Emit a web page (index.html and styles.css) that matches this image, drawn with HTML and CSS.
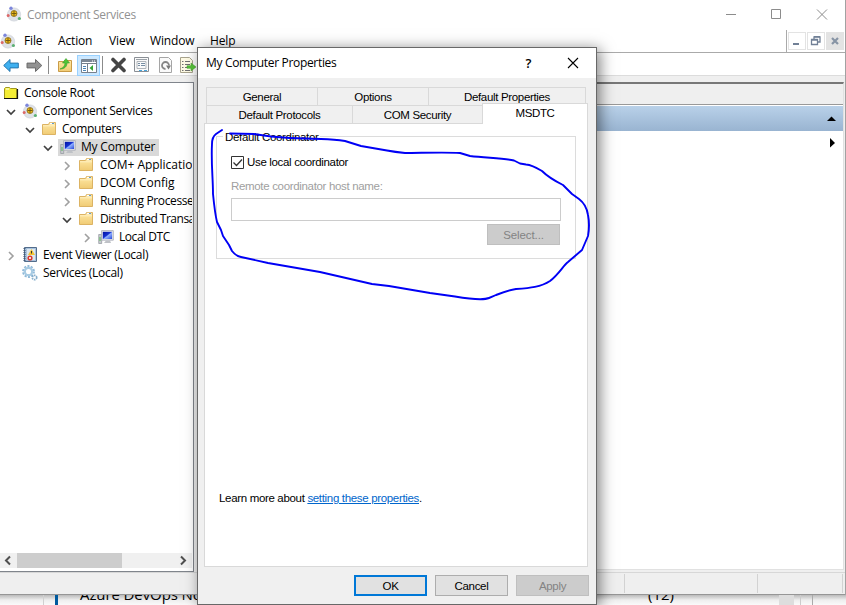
FILE: index.html
```html
<!DOCTYPE html>
<html lang="en">
<head>
<meta charset="utf-8">
<title>Component Services</title>
<link rel="stylesheet" href="styles.css">
</head>
<body>
<svg class="defs" width="0" height="0">
  <defs>
    <linearGradient id="gold" x2="0" y2="1"><stop offset="0" stop-color="#ffe9a6"/><stop offset="1" stop-color="#f0cb74"/></linearGradient>
    <linearGradient id="screen" x2="1" y2="1"><stop offset="0" stop-color="#0010a0"/><stop offset=".45" stop-color="#1530d0"/><stop offset=".55" stop-color="#90b0ff"/><stop offset="1" stop-color="#2848d8"/></linearGradient>
    <symbol id="com" viewBox="0 0 16 16">
      <circle cx="8" cy="8.500" r="6.600" fill="#dfe2e8" stroke="#cdd1d8" stroke-width=".7"/>
      <circle cx="8" cy="7.500" r="3" fill="#f0bd18" stroke="#80651c" stroke-width=".8"/>
      <path d="M8 5v5M5.500 7.500h5" stroke="#6b5410" stroke-width=".9"/>
      <circle cx="5" cy="2.200" r="1.700" fill="#7c86dc"/><circle cx="2.200" cy="9.400" r="1.500" fill="#dc6868"/><circle cx="13.400" cy="12.500" r="1.600" fill="#5cb074"/>
    </symbol>
    <symbol id="folder" viewBox="0 0 16 16">
      <path d="M1.500 3.500h6l1-2h6v12h-13z" fill="url(#gold)" stroke="#dcb363"/><path d="M9 2.500h4" stroke="#fff" stroke-width="1.400"/><path d="M11 2.500h2" stroke="#5d9bd0"/><path d="M2 4.800h12" stroke="#fff0bf"/>
    </symbol>
    <symbol id="pc" viewBox="0 0 16 16">
      <path d="M.7 5.500h3v9h-3z" fill="#c7cbd0" stroke="#8f959c" stroke-width=".7"/><path d="M2 8v4" stroke="#57b857"/>
      <path d="M3.600 1.600h11.700v9.600H3.600z" fill="#e9e9ed" stroke="#a4a8b3" stroke-width=".8"/><path d="M4.800 2.800h9.300v7.200H4.800z" fill="url(#screen)"/>
      <path d="M8 11.500h4l1 2.500H6z" fill="#bfc2c7"/>
    </symbol>
    <symbol id="down" viewBox="0 0 10 10"><path d="M1 3l4 4 4-4" fill="none" stroke="#404040" stroke-width="1.700"/></symbol>
    <symbol id="right" viewBox="0 0 10 10"><path d="M3 1l4 4-4 4" fill="none" stroke="#a0a0a0" stroke-width="1.600"/></symbol>
  </defs>
</svg>

<div class="desktop">
  <main class="window">
    <header class="titlebar">
      <svg class="logo" width="16" height="16"><use href="#com"/></svg>
      <span class="title">Component Services</span>
      <svg class="winbtns" width="110" height="30" fill="none" stroke="#8c8c8c"><path d="M5 14.500h10M50.500 9.500h9v9h-9zM96 9.500l10 10M106 9.500l-10 10"/></svg>
    </header>
    <nav class="menubar">
      <svg class="menulogo" width="16" height="16"><use href="#com"/></svg>
      <span class="m-file">File</span><span class="m-action">Action</span><span class="m-view">View</span><span class="m-window">Window</span><span class="m-help">Help</span>
      <div class="mdi">
        <b><svg width="18" height="18"><path d="M5 12h6" stroke="#718096" stroke-width="2"/></svg></b>
        <b><svg width="18" height="18" fill="none" stroke="#718096" stroke-width="1.300"><path d="M7 7V5h6v5h-2"/><path d="M4.500 7.500h6v5h-6zM7 4.700h6M4 8h7"/></svg></b>
        <b class="off"><svg width="18" height="18"><path d="M6 6l6 6M12 6l-6 6" stroke="#8794a5" stroke-width="2.200"/></svg></b>
      </div>
    </nav>
    <div class="toolbar">
      <svg class="t-back" width="17" height="15" fill="#3fb0f0" stroke="#2777ae"><path d="M.7 7.500L7 1.500v3.600h8.300v4.800H7v3.600z"/></svg>
      <svg class="t-fwd" width="17" height="15" fill="#929292" stroke="#6b6b6b"><path d="M15.800 7.500L9.500 1.500v3.600H1v4.800h8.500v3.600z"/></svg>
      <i></i>
      <svg class="t-up" width="16" height="16"><path d="M1.500 4.500h5l1-1h7v11h-13z" fill="url(#gold)" stroke="#c99b47"/><path d="M3 12c3-1 5-3 5-6H5.500L9 1.500 12.500 6H10c0 4-3 6-7 6z" fill="#4fc436" stroke="#3b9d2b" stroke-width=".6"/></svg>
      <span class="pressed"><svg width="17" height="16"><path d="M.5 1.500h15v13H.5z" fill="#fff" stroke="#76808c"/><path d="M1 3h14" stroke="#7c8794" stroke-width="2"/><path d="M.5 5.500h15M6.500 6v8" stroke="#76808c"/><path d="M11 3h1M13 3h1" stroke="#fff"/><path d="M2 8.500h3M2 10.500h3M2 12.500h3" stroke="#4b84b5"/><path d="M12 7v6L8.500 10z" fill="#36a636"/></svg></span>
      <i></i>
      <svg class="t-del" width="17" height="16"><path d="M3 2.500l11 11M14 2.500l-11 11" stroke="#454545" stroke-width="3.600" stroke-linecap="round"/></svg>
      <svg class="t-prop" width="15" height="16"><path d="M.5.500h14v14H.500z" fill="#fafafa" stroke="#8a8f95"/><path d="M2 2.500h11" stroke="#9aa1a8"/><path d="M3 4.500h9v7H3z" fill="none" stroke="#b0b5ba"/><path d="M4 6.500h2M7 6.500h4M4 8.500h2M7 8.500h4" stroke="#758da3"/><path d="M5 13.500h3M10 13.500h3" stroke="#47a4db"/></svg>
      <svg class="t-ref" width="14" height="16"><path d="M.5.500h9l3 3v12H.500z" fill="#fafafa" stroke="#a5a5a5"/><path d="M6.500 12A3.500 3.500 0 1 1 10 8.500" fill="none" stroke="#858585" stroke-width="1.800"/><path d="M7 8.500h5l-2.500 4z" fill="#777"/></svg>
      <svg class="t-exp" width="17" height="16"><path d="M.5.500h9l3 3v12H.500z" fill="#fffbe5" stroke="#a9a48e"/><path d="M2 4.500h1.500M5 4.500h5M2 7.500h1.500M5 7.500h5M2 10.500h1.500M5 10.500h4M2 13.500h1.500M5 13.500h5" stroke="#727272"/><path d="M7 8.700h4V6l5 4-5 4v-2.700H7z" fill="#58c63b" stroke="#3f9c29" stroke-width=".5"/></svg>
    </div>
    <section class="panes">
      <div class="treepane">
        <div class="tree">
          <div class="row l0"><svg width="16" height="16"><path d="M1.500 3.500l1-1h4l1 1h6v10h-12z" fill="#f4ed36" stroke="#a09820"/><path d="M1 13.500h13.500V4" fill="none" stroke="#111" stroke-width="1.200"/><path d="M3 4h3" stroke="#fff"/></svg><span>Console Root</span></div>
          <div class="row l1"><svg class="ch" width="10" height="10"><use href="#down"/></svg><svg width="16" height="16"><use href="#com"/></svg><span>Component Services</span></div>
          <div class="row l2"><svg class="ch" width="10" height="10"><use href="#down"/></svg><svg width="16" height="16"><use href="#folder"/></svg><span>Computers</span></div>
          <div class="row l3"><svg class="ch" width="10" height="10"><use href="#down"/></svg><div class="sel"><svg width="16" height="16"><use href="#pc"/></svg><span>My Computer</span></div></div>
          <div class="row l4"><svg class="ch" width="10" height="10"><use href="#right"/></svg><svg width="16" height="16"><use href="#folder"/></svg><span class="apps">COM+ Applicatio</span></div>
          <div class="row l4"><svg class="ch" width="10" height="10"><use href="#right"/></svg><svg width="16" height="16"><use href="#folder"/></svg><span class="dcom">DCOM Config</span></div>
          <div class="row l4"><svg class="ch" width="10" height="10"><use href="#right"/></svg><svg width="16" height="16"><use href="#folder"/></svg><span class="proc">Running Processe</span></div>
          <div class="row l4"><svg class="ch" width="10" height="10"><use href="#down"/></svg><svg width="16" height="16"><use href="#folder"/></svg><span class="dist">Distributed Transa</span></div>
          <div class="row l5"><svg class="ch" width="10" height="10"><use href="#right"/></svg><svg width="16" height="16"><use href="#pc"/></svg><span>Local DTC</span></div>
          <div class="row l1"><svg class="ch" width="10" height="10"><use href="#right"/></svg><svg width="16" height="16"><path d="M2.500.500h12v14h-12z" fill="#a9c3dd" stroke="#536d8c"/><path d="M2.500 1v14" stroke="#425a78" stroke-width="2" stroke-dasharray="1 1"/><path d="M5 2h8v11H5z" fill="#dce7ef"/><path d="M9.500 2l3.500 6H6z" fill="#f4c430"/><path d="M9.500 4v2.500" stroke="#333"/><circle cx="8" cy="11" r="2.600" fill="#d93a32"/><path d="M7 10l2 2M9 10l-2 2" stroke="#fff" stroke-width=".8"/></svg><span>Event Viewer (Local)</span></div>
          <div class="row l1 nochev"><svg width="16" height="16" fill="none"><circle cx="6.500" cy="6.500" r="5.500" stroke="#8fb9d8" stroke-width="1.800" stroke-dasharray="2.100 1.350"/><circle cx="6.500" cy="6.500" r="3.700" stroke="#a8cbe3" stroke-width="2.300"/><circle cx="12.500" cy="12.500" r="2.200" stroke="#88afcc" stroke-width="1.700" stroke-dasharray="1.500 .7"/></svg><span>Services (Local)</span></div>
        </div>
        <div class="hscroll"><svg width="16" height="15" fill="none" stroke="#505050" stroke-width="2"><path d="M10 3.500L6 7.500l4 4"/></svg><div class="thumb"></div><svg class="end" width="16" height="15" fill="none" stroke="#505050" stroke-width="2"><path d="M5 3.500l4 4-4 4"/></svg></div>
      </div>
      <div class="actions">
        <div class="achead"></div>
        <div class="acblue"><svg width="12" height="8"><path d="M1 6L5.500 1.500 10 6z"/></svg></div>
        <div class="acrow"><svg width="8" height="10"><path d="M1 0v9.500L6 5z"/></svg></div>
      </div>
    </section>
    <footer class="status"><i class="s1"></i><i class="s2"></i><i class="s3"></i></footer>
  </main>
  <div class="edge"></div>
  <div class="behind">
    <div class="bleft"></div><div class="bbar"></div><span class="azure">Azure DevOps No</span><span class="count">(12)</span><div class="bscroll"></div><div class="bend"></div>
  </div>
</div>

<div class="dialog">
  <header class="dtitle"><span>My Computer Properties</span><em>?</em><svg width="12" height="12" stroke="#000" stroke-width="1.100"><path d="M1 1l10 10M11 1L1 11"/></svg></header>
  <div class="tabs">
    <div class="tabrow top"><div class="tab"><span>General</span></div><div class="tab"><span>Options</span></div><div class="tab"><span>Default Properties</span></div></div>
    <div class="tabrow bottom"><div class="tab"><span>Default Protocols</span></div><div class="tab"><span>COM Security</span></div><div class="tab active"><span class="x-ms">MSDTC</span></div></div>
  </div>
  <div class="page">
    <div class="group">
      <span class="legend">Default Coordinator</span>
      <div class="check"><svg width="13" height="13" fill="#fff" stroke="#333"><path d="M.5.500h12v12H.500z"/><path d="M2.500 6.500l3 3 5.500-6" fill="none" stroke-width="1.300"/></svg><span>Use local coordinator</span></div>
      <div class="rlabel"><span>Remote coordinator host name:</span></div>
      <div class="input"></div>
      <div class="btn disabled select"><span>Select...</span></div>
    </div>
    <div class="learn"><span>Learn more about </span><a>setting these properties</a>.</div>
  </div>
  <footer class="buttons"><div class="btn ok"><span>OK</span></div><div class="btn"><span>Cancel</span></div><div class="btn disabled"><span>Apply</span></div></footer>
</div>

<svg class="ink" width="846" height="605"><path d="M222 130L216 134Q212 137 212 144C211 163 213 178 213 194Q215 214 217 222L221 230 223 236 229 245 232 251Q236 256 241 257L268 263 320 272 372 284 389 286 430 293 455 296.500C470 299 483 300.500 489 298L496 295Q509 290 516 289C530 288 541 287 550 281C559 274 563 266 568 262L582 250Q585 243 588 236Q590 225 588 215C587 208 583 202 579 199L572 194 563 185C553 180 546 175 542 171Q532 165 526 164.500L520 163.500 514 160.500C504 158 486 158 470 156L460 153C445 152 420 153 405 153Q395 152 387 150.500L361 146 345 141Q335 139.500 321 139L290 138Q270 137 254 134L230 133.500" fill="none" stroke="#0000f5" stroke-width="1.900" stroke-linejoin="round" stroke-linecap="round"/></svg>
</body>
</html>
```
FILE: styles.css
```css
* { box-sizing: border-box; }
body { margin: 0; width: 846px; height: 605px; overflow: hidden; background: #fff; color: #000; font: 12px/18px "Open Sans", "Noto Sans", sans-serif; }
svg { display: block; flex: none; }
span { white-space: pre; }
.defs { position: absolute; }
.desktop { display: grid; grid-template: 595px 10px / 845px 1px; height: 605px; overflow: hidden; }
.window { display: flex; flex-direction: column; background: #efefef; border-bottom: 1px solid #969696; overflow: hidden; }
.edge { background: #a2a2a2; }

.titlebar { display: flex; align-items: center; height: 30px; background: #fff; padding-left: 6px; color: #929292; }
.logo { margin-top: -2px; }
.title { margin-left: 5px; letter-spacing: -.33px; }
.winbtns { margin-left: auto; margin-right: 14px; }
.menubar { display: flex; align-items: center; height: 23px; background: #fff; border-bottom: 1px solid #aaa; }
.menubar span { letter-spacing: -.15px; }
.m-file { margin-left: 8px; width: 34px; }
.m-action { width: 51px; }
.m-view { width: 41px; }
.m-window { width: 60px; }
.mdi { display: flex; gap: 1px; margin-left: auto; margin-right: 1px; height: 23px; align-items: center; border-left: 1px solid #aaa; padding-left: 1px; }
.mdi b { width: 18px; height: 18px; border: 1px solid #e3e3e3; }
.mdi svg { margin: -1px; }
.mdi .off { background: #e3e3e3; }
.toolbar { display: flex; align-items: center; height: 23px; background: #fff; border-bottom: 1px solid #dcdcdc; padding: 2px 0 0 3px; }
.toolbar i { width: 1px; height: 18px; background: #8b8b8b; }
.t-fwd { margin: 0 5px 0 6px; }
.toolbar .t-fwd + i { margin-right: 8px; }
.t-up { margin-right: 4px; }
.pressed { width: 23px; height: 21px; padding: 2px 3px; background: #cce8ff; border: 1px solid #99d1ff; margin-right: 2px; }
.t-del { margin: 0 7px; }
.t-prop { margin-right: 10px; }
.t-ref { margin-right: 7px; }

.panes { display: flex; flex: none; height: 496px; padding-top: 6px; gap: 3px; }
.treepane { display: flex; flex-direction: column; width: 194px; height: 490px; border: solid #80858c; border-width: 1px 1px 1px 0; background: #fff; overflow: hidden; }
.tree { flex: 1; padding-top: 1px; margin-right: 1px; overflow: hidden; letter-spacing: -.3px; }
.row { display: flex; align-items: center; height: 18px; }
.row .ch { margin-right: 6px; margin-top: 2px; }
.row > svg:not(.ch) { margin-right: 5px; }
.l0 { padding-left: 3px; }
.l1 { padding-left: 6px; }
.l2 { padding-left: 25px; }
.l3 { padding-left: 43px; }
.l4 { padding-left: 62px; }
.l4 span { margin-left: 1px; }
.apps { letter-spacing: -.04px; }
.dcom { letter-spacing: -.08px; }
.proc { letter-spacing: -.38px; }
.dist { letter-spacing: -.5px; }
.l5 { padding-left: 82px; letter-spacing: -.45px; }
.nochev { padding-left: 22px; }
.sel { display: flex; align-items: center; gap: 5px; width: 101px; height: 17px; margin-left: -1px; padding-left: 2px; background: #d9d9d9; letter-spacing: -.2px; }
.hscroll { display: flex; height: 15px; background: #f0f0f0; margin: 0 1px 3px 0; }
.thumb { width: 105px; height: 15px; background: #cdcdcd; margin-left: 1px; }
.end { margin-left: auto; }
.actions { flex: 1; border-right: 1px solid #e1e1e1; border-bottom: 1px solid #e1e1e1; border-top: 2px solid #777; margin: 0 1px 2px 0; background: #fff; }
.achead { height: 21px; background: #efefef; border-bottom: 1px solid #999; }
.acblue { height: 25px; margin-top: 1px; display: flex; align-items: center; justify-content: flex-end; padding-right: 5px; background: linear-gradient(#b9d1e9, #99b4d1); }
.acrow { display: flex; justify-content: flex-end; padding: 7px 6px 0 0; }
.status { display: flex; flex: 1; border-top: 1px solid #d7d7d7; padding: 1px 0; }
.status i { width: 1px; background: #d2d2d2; }
.s1 { margin-left: 624px; }
.s2 { margin-left: 132px; }
.s3 { margin-left: 84px; }

.behind { grid-column: 1 / 3; display: flex; height: 10px; overflow: hidden; background: linear-gradient(#bbb, #eee 50%, #fafafa); font: 15px/18px "Open Sans", sans-serif; }
.behind span { margin-top: -10px; }
.bleft { width: 44px; border-right: 1px solid #d0d0d0; }
.bbar { width: 3px; margin-left: 11px; background: #005a9e; }
.azure { width: 570px; padding-left: 22px; height: 20px; letter-spacing: -.1px; }
.count { margin-left: 20px; width: 131px; }
.bscroll { width: 15px; background: #ddd; }
.bend { width: 13px; border-left: 1px solid #ccc; border-right: 1px solid #aaa; margin-left: 6px; }

.dialog { position: absolute; left: 197px; top: 47px; width: 400px; height: 558px; display: flex; flex-direction: column; border: 1px solid #686868; background: #f0f0f0; box-shadow: 3px 2px 14px rgba(0,0,0,.5); font: 11.5px/16px "Liberation Sans", Arial, sans-serif; letter-spacing: -.33px; }
.dtitle { display: flex; align-items: center; height: 30px; background: #fff; padding: 0 17px 0 8px; font: 12px/18px "Open Sans", sans-serif; letter-spacing: -.33px; }
.dtitle em { margin-left: auto; margin-right: 36px; font-style: normal; font-size: 13px; font-weight: 600; }
.tabs { height: 45px; padding: 9px 9px 0 8px; }
.tabrow { display: grid; height: 18px; }
.top { grid-template-columns: 111px 111px 158px; }
.bottom { grid-template-columns: 146px 130px 106px; }
.tab { border: solid #d9d9d9; border-width: 1px 0 0 1px; text-align: center; height: 18px; line-height: 18px; }
.top .tab:last-child { border-right-width: 1px; }
.x-ms { letter-spacing: -.35px; }
.active { height: 21px; margin-top: -2px; background: #fff; border-right-width: 1px; z-index: 1; }
.page { width: 384px; height: 444px; margin-left: 6px; background: #fff; border: 1px solid #d9d9d9; padding: 12px 11px; }
.group { position: relative; width: 360px; height: 123px; border: 1px solid #dcdcdc; padding: 18px 14px 0; }
.legend { position: absolute; left: 6px; top: -8px; padding: 0 2px; background: #fff; }
.check { display: flex; align-items: center; gap: 3px; height: 14px; }
.rlabel { color: #a0a0a0; margin-top: 9px; }
.input { width: 330px; height: 23px; border: 1px solid #ccc; margin-top: 4px; }
.btn { width: 73px; height: 21px; line-height: 20px; text-align: center; background: #e1e1e1; border: 1px solid #adadad; }
.disabled { background: #ccc; border-color: #bfbfbf; color: #838383; }
.select { margin: 3px 0 0 256px; letter-spacing: -.1px; }
.learn { margin: 231px 0 0 3px; }
.learn a { color: #0066cc; text-decoration: underline; }
.buttons { display: flex; gap: 8px; justify-content: flex-end; padding: 8px 7px 0; }
.ok { border: 2px solid #0078d7; line-height: 18px; }
.ink { position: absolute; left: 0; top: 0; pointer-events: none; }
```
